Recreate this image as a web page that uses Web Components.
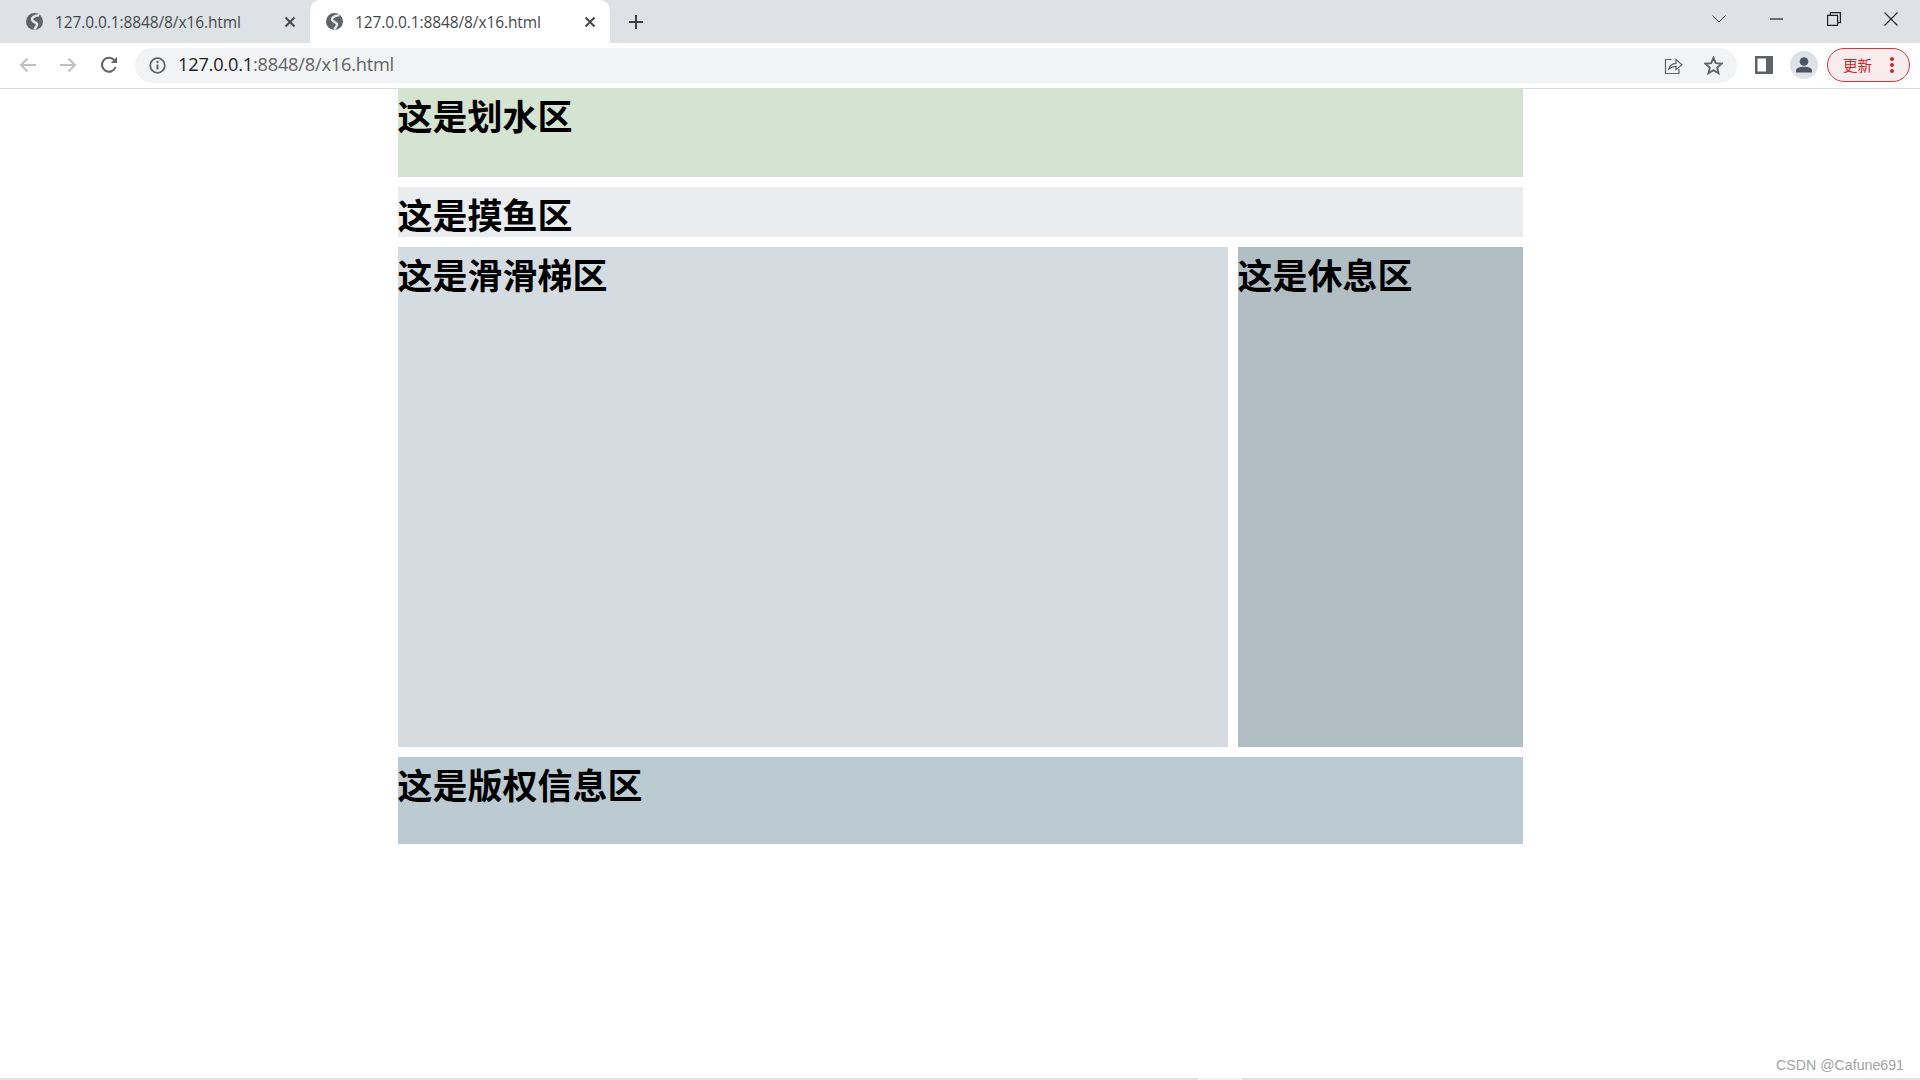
<!DOCTYPE html>
<html lang="zh">
<head>
<meta charset="utf-8">
<title>x16</title>
<style>
  html, body { margin: 0; height: 100%; background: #fff; overflow: hidden; }
  body { font-family: "Noto Sans", "Noto Sans CJK SC", sans-serif; }
</style>
</head>
<body>
<template id="t-globe">
  <style>:host { display: inline-flex; width: 17px; height: 17px; } svg { width: 17px; height: 17px; }</style>
  <svg viewBox="0 0 16 16"><circle cx="8" cy="8" r="8" fill="#5f6368"/><path d="M12.500 2C7.500 2.500 4 5 6.500 7.500C9 9.500 11.500 9.300 9.800 12.300L7.800 15.500" fill="none" stroke="#e4e6ea" stroke-width="2.300"/></svg>
</template>

<script>
  // every element gets its own shadow root, open so the text check can read it
  const shadow = (el, html) => {
    el.attachShadow({ mode: 'open' }).innerHTML = html;
  };

  class BrowserTab extends HTMLElement {
    connectedCallback() {
      const active = this.hasAttribute('active');
      shadow(this, `
<style>
:host {
  display: flex;
  align-items: center;
  position: relative;
  box-sizing: border-box;
  width: 300px;
  height: 43px;
  padding: 0 14px 0 16px;
  gap: 12px;
  background: ${active ? '#fff' : 'transparent'};
  border-radius: 10px 10px 0 0;
  color: #45494e;
  font: 15.5px "Open Sans", "Noto Sans", sans-serif;
}
.title { flex: 1; white-space: nowrap; overflow: hidden; letter-spacing: -0.1px; }
.close { width: 12px; height: 12px; }
svg { display: block; }
</style>
<tab-globe></tab-globe>
<span class="title"><slot></slot></span>
<svg class="close" viewBox="0 0 12 12"><path d="M1.500 1.500 10.500 10.500M10.500 1.500 1.500 10.500" stroke="#45494e" stroke-width="2"/></svg>`);
    }
  }

  class TabGlobe extends HTMLElement {
    connectedCallback() {
      this.attachShadow({ mode: 'open' }).appendChild(document.getElementById('t-globe').content.cloneNode(true));
    }
  }

  class TabStrip extends HTMLElement {
    connectedCallback() {
      shadow(this, `
<style>
:host { display: flex; align-items: center; height: 43px; background: #dee1e6; padding-left: 10px; }
.tabs { display: flex; height: 43px; align-items: flex-end; }
.plus { margin-left: 18px; width: 16px; height: 16px; }
.space { flex: 1; }
.win { display: flex; align-items: center; justify-content: center; width: 57px; height: 36px; margin-top: -6px; }
.chev { margin-right: 1px; }
.win:last-child { margin-right: 1px; }
svg { display: block; }
</style>
<div class="tabs"><slot></slot></div>
<svg class="plus" viewBox="0 0 16 16"><path d="M8 1V15M1 8H15" stroke="#3c4043" stroke-width="2"/></svg>
<div class="space"></div>
<div class="win chev"><svg width="14" height="8" viewBox="0 0 14 8"><path d="M.5.5 7 7 13.500.5" fill="none" stroke="#3c4043"/></svg></div>
<div class="win"><svg width="13" height="2" viewBox="0 0 13 2"><path d="M0 1H13" stroke="#202124" stroke-width="1.200"/></svg></div>
<div class="win"><svg width="14" height="14" viewBox="0 0 14 14"><path d="M.6 3.400H10.600V13.400H.6ZM3.400 3.400V.6H13.400V10.600H10.600" fill="none" stroke="#202124" stroke-width="1.200"/></svg></div>
<div class="win"><svg width="14" height="14" viewBox="0 0 14 14"><path d="M.5.5 13.500 13.500M13.500.5.5 13.500" stroke="#202124" stroke-width="1.100"/></svg></div>`);
    }
  }

  class NavBar extends HTMLElement {
    connectedCallback() {
      shadow(this, `
<style>
:host {
  display: flex;
  align-items: center;
  box-sizing: border-box;
  height: 46px;
  margin-bottom: -1px;
  padding: 0 10px 1px 19px;
  background: #fff;
  border-bottom: 1px solid #dadce0;
}
svg { display: block; flex: none; }
.arrows { display: flex; align-items: center; gap: 22px; margin-right: 27px; }
.arrows svg:last-child { margin-left: 1px; }
.omni {
  flex: 1;
  display: flex;
  align-items: center;
  height: 35px;
  border-radius: 18px;
  background: #f1f3f4;
  padding: 0 14px 0 14px;
  margin-left: -10px;
}
.url { margin: 0 0 2px 12px; font: 18.200px "Open Sans", "Noto Sans", sans-serif; letter-spacing: -0.2px; color: #5f6368; white-space: nowrap; }
.url b { font-weight: 400; color: #202124; }
.space { flex: 1; }
.star { margin-left: 21px; }
.panel { margin-left: 18px; }
.avatar { margin-left: 17px; }
.update {
  display: flex;
  align-items: center;
  box-sizing: border-box;
  width: 83px;
  height: 34px;
  margin-left: 9px;
  padding-left: 15px;
  border: 1.500px solid #d6373c;
  border-radius: 17px;
  background: #f9ecec;
  color: #d1242b;
  font: 14.500px "Noto Sans CJK SC", sans-serif;
}
.update span { margin-bottom: 2px; }
.update svg { margin-left: 18px; }
</style>
<div class="arrows">
  <svg width="18" height="16" viewBox="0 0 18 16"><path d="M17 8H2M8.500 1.500 2 8 8.500 14.500" fill="none" stroke="#bdc1c6" stroke-width="2"/></svg>
  <svg width="18" height="16" viewBox="0 0 18 16"><path d="M1 8H16M9.500 1.500 16 8 9.500 14.500" fill="none" stroke="#bdc1c6" stroke-width="2"/></svg>
  <svg width="18" height="18" viewBox="0 0 18 18"><path d="M15.600 11A7 7 0 1 1 14.200 4" fill="none" stroke="#5f6368" stroke-width="2"/><path d="M10.800 7H17V.8Z" fill="#5f6368"/></svg>
</div>
<div class="omni">
  <svg width="17" height="17" viewBox="0 0 17 17"><circle cx="8.500" cy="8.500" r="7.300" fill="none" stroke="#5f6368" stroke-width="1.800"/><path d="M8.500 7.500V12.500" stroke="#5f6368" stroke-width="2"/><circle cx="8.500" cy="5" r="1.200" fill="#5f6368"/></svg>
  <span class="url"><b>127.0.0.1</b>:8848/8/x16.html</span>
  <div class="space"></div>
  <svg width="19" height="19" viewBox="0 0 19 19"><path d="M7.500 3.500H1.500V17.500H15V13" fill="none" stroke="#5f6368" stroke-width="1.200"/><path d="M4.800 13C5.800 9.500 8.200 7.600 12 7.400V3.500L18 8.800 12 13.600V10.300C9 10.300 6.800 11.100 4.800 13Z" fill="none" stroke="#5f6368" stroke-width="1.200"/></svg>
  <svg class="star" width="19" height="19" viewBox="0 0 19 19"><path d="M9.500 1.800 11.800 7.200 17.600 7.700 13.200 11.500 14.500 17.200 9.500 14.200 4.500 17.200 5.800 11.500 1.400 7.700 7.200 7.200Z" fill="none" stroke="#5f6368" stroke-width="1.900"/></svg>
</div>
<svg class="panel" width="18" height="18" viewBox="0 0 18 18"><path d="M0 0H18V18H0Z" fill="#5f6368"/><path d="M2.500 2.500H11V15.500H2.500Z" fill="#fff"/></svg>
<svg class="avatar" width="28" height="28" viewBox="0 0 28 28"><circle cx="14" cy="14" r="14" fill="#dee1e6"/><circle cx="14" cy="10.500" r="4.300" fill="#4b5563"/><path d="M6 21.500V19.500C6 17 10 15.800 14 15.800S22 17 22 19.500V21.500Z" fill="#4b5563"/></svg>
<div class="update"><span><slot></slot></span>
  <svg width="4" height="16" viewBox="0 0 4 16"><circle cx="2" cy="2" r="2" fill="#d1242b"/><circle cx="2" cy="8" r="2" fill="#d1242b"/><circle cx="2" cy="14" r="2" fill="#d1242b"/></svg>
</div>`);
    }
  }

  class PageBlock extends HTMLElement {
    connectedCallback() {
      shadow(this, `
<style>
:host {
  display: block;
  background: var(--fill, #eee);
}
h2 {
  margin: 0;
  padding-top: 4px;
  font: 700 35px/46px "Noto Sans CJK SC", sans-serif;
  color: #000;
  white-space: nowrap;
}
</style>
<h2><slot></slot></h2>`);
    }
  }

  class LayoutDemo extends HTMLElement {
    connectedCallback() {
      shadow(this, `
<style>
:host { display: flex; flex-direction: column; flex: 1; align-items: center; position: relative; }
.wrap { display: flex; flex-direction: column; gap: 10px; width: 1125px; }
::slotted([slot=header]) { height: 89px; }
::slotted([slot=nav]) { height: 50px; }
.row { display: flex; gap: 10px; height: 500px; }
::slotted([slot=main]) { flex: 1; }
::slotted([slot=aside]) { width: 285px; }
::slotted([slot=footer]) { height: 87px; }
</style>
<div class="wrap">
  <slot name="header"></slot>
  <slot name="nav"></slot>
  <div class="row"><slot name="main"></slot><slot name="aside"></slot></div>
  <slot name="footer"></slot>
</div>`);
    }
  }

  class TaskEdge extends HTMLElement {
    connectedCallback() {
      shadow(this, `
<style>
:host { display: flex; height: 2px; background: #e2e2e2; }
.a { width: 1198px; } .b { width: 44px; background: #f2f2f2; }
</style>
<div class="a"></div><div class="b"></div>`);
    }
  }

  class WaterMark extends HTMLElement {
    connectedCallback() {
      shadow(this, `
<style>
:host {
  position: absolute;
  right: 16px;
  bottom: 7px;
  font: 14.200px "Liberation Sans", sans-serif;
  color: #a3a3a3;
}
</style>
<slot></slot>`);
    }
  }

  class BrowserWindow extends HTMLElement {
    connectedCallback() {
      shadow(this, `
<style>
:host { display: flex; flex-direction: column; position: relative; height: 100vh; }
</style>
<slot></slot>`);
    }
  }

  customElements.define('tab-globe', TabGlobe);
  customElements.define('browser-tab', BrowserTab);
  customElements.define('tab-strip', TabStrip);
  customElements.define('nav-bar', NavBar);
  customElements.define('page-block', PageBlock);
  customElements.define('layout-demo', LayoutDemo);
  customElements.define('task-edge', TaskEdge);
  customElements.define('water-mark', WaterMark);
  customElements.define('browser-window', BrowserWindow);
</script>

<browser-window>
  <tab-strip>
    <browser-tab>127.0.0.1:8848/8/x16.html</browser-tab>
    <browser-tab active>127.0.0.1:8848/8/x16.html</browser-tab>
  </tab-strip>
  <nav-bar>更新</nav-bar>
  <layout-demo>
    <page-block slot="header" style="--fill:#d5e4d0">这是划水区</page-block>
    <page-block slot="nav" style="--fill:#e9edf0">这是摸鱼区</page-block>
    <page-block slot="main" style="--fill:#d4dce2">这是滑滑梯区</page-block>
    <page-block slot="aside" style="--fill:#b1bec3">这是休息区</page-block>
    <page-block slot="footer" style="--fill:#bccbd2">这是版权信息区</page-block>
  </layout-demo>
  <water-mark>CSDN @Cafune691</water-mark>
  <task-edge></task-edge>
</browser-window>
</body>
</html>
